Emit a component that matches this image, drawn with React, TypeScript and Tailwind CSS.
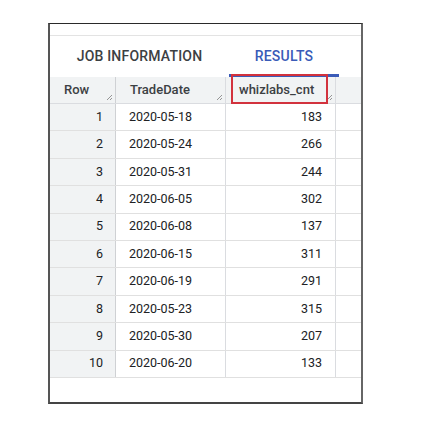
import React from 'react';

const rows: [number, string, number][] = [
  [1, '2020-05-18', 183],
  [2, '2020-05-24', 266],
  [3, '2020-05-31', 244],
  [4, '2020-06-05', 302],
  [5, '2020-06-08', 137],
  [6, '2020-06-15', 311],
  [7, '2020-06-19', 291],
  [8, '2020-05-23', 315],
  [9, '2020-05-30', 207],
  [10, '2020-06-20', 133],
];

function Grip() {
  return (
    <svg className="absolute right-[2px] bottom-[2px]" width="7" height="7" viewBox="0 0 7 7">
      <path d="M1 6 L6 1 M4 6 L6 4" stroke="#8a8a8a" strokeWidth="0.9" />
    </svg>
  );
}

export default function App() {
  return (
    <div className="w-[439px] h-[427px] bg-white" style={{ fontFamily: 'Roboto, "Liberation Sans", sans-serif' }}>
      <div className="pt-[23px] pl-[48px]">
        <div className="w-[315px] h-[381px] border-t border-l-2 border-r-2 border-b-2 border-t-[#2a2a2a] border-l-[#555] border-r-[#666] border-b-[#444] flex flex-col">
          <div className="h-[12px] border-b border-[#e3e3e3]" />
          <div className="h-[41px] flex text-[14px] font-medium tracking-[0.2px]">
            <div className="w-[179px] flex items-center justify-center text-[#3c4043]">JOB INFORMATION</div>
            <div className="w-[110px] flex items-center justify-center text-[#3a5bb8] border-b-[3px] border-[#3a5bb8] pt-[3px]">RESULTS</div>
          </div>
          <div className="flex flex-col text-[12.5px] text-[#202124]">
            <div className="flex h-[27px] bg-[#f1f3f4] border-b border-[#dadce0] text-[13px] font-medium text-[#3c4043]">
              <div className="relative w-[66px] flex items-center pl-[14px] border-r border-[#cfd1d4]">
                Row
                <Grip />
              </div>
              <div className="relative w-[110px] flex items-center pl-[14px] border-r border-[#dadce0]">
                TradeDate
                <Grip />
              </div>
              <div className="relative w-[110px] flex items-center pl-[13px] border-r border-[#dadce0]">
                whizlabs_cnt
                <Grip />
                <div className="absolute left-[5px] top-[-3px] w-[97px] h-[30px] border-2 border-[#d2323d]" />
              </div>
              <div className="flex-1" />
            </div>
            {rows.map(([n, d, c]) => (
              <div key={n} className="flex h-[27.4px] border-b border-[#e0e0e0]">
                <div className="w-[66px] flex items-center justify-end pr-[12px] bg-[#f1f3f4] border-r border-[#cfd1d4]">{n}</div>
                <div className="w-[110px] flex items-center pl-[13px] border-r border-[#dadce0]">{d}</div>
                <div className="w-[110px] flex items-center justify-end pr-[13px] border-r border-[#dadce0]">{c}</div>
                <div className="flex-1" />
              </div>
            ))}
          </div>
        </div>
      </div>
    </div>
  );
}
